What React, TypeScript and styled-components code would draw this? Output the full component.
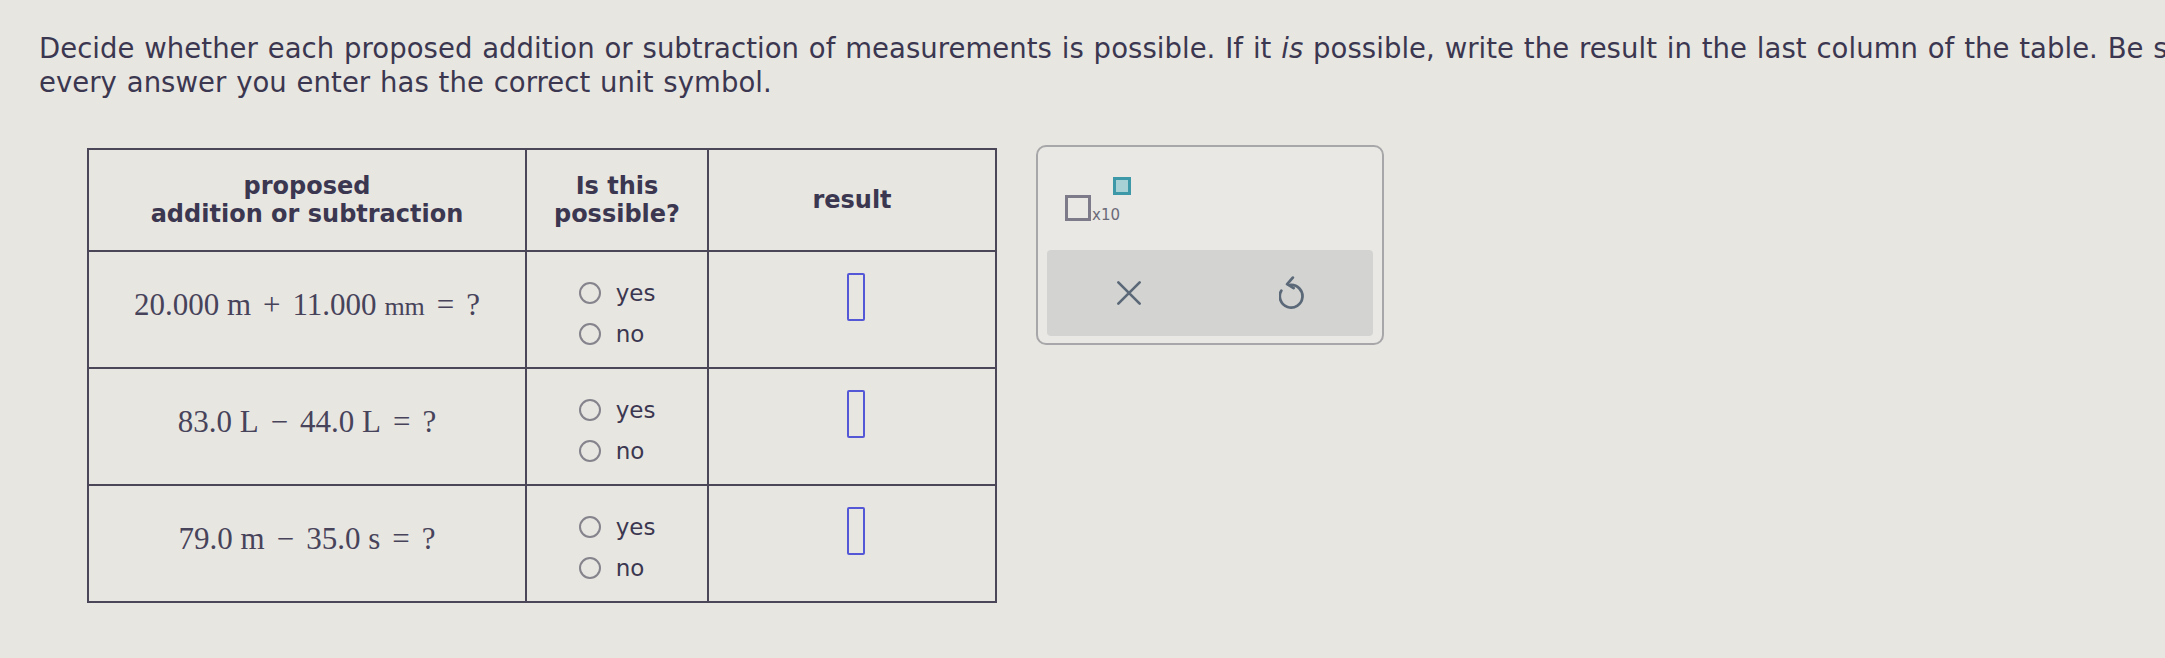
import React from "react";
import styled, { createGlobalStyle } from "styled-components";

const Global = createGlobalStyle`
  html, body {
    margin: 0;
    padding: 0;
    background: #e8e6e1;
    overflow: hidden;
  }
  body {
    width: 2165px;
    height: 658px;
  }
`;

const Page = styled.div`
  padding: 31px 0 0 39px;
  font-family: "DejaVu Sans", Verdana, sans-serif;
  color: #3b3750;
  width: 2165px;
  height: 658px;
  box-sizing: border-box;
  overflow: hidden;
`;

const Instructions = styled.p`
  margin: 0;
  font-size: 27.5px;
  line-height: 34px;
  white-space: nowrap;
  letter-spacing: 0.05px;
  word-spacing: 1px;
`;

const Content = styled.div`
  display: flex;
  align-items: flex-start;
  gap: 39px;
  margin-top: 49px;
  margin-left: 48px;
`;

const Table = styled.table`
  border-collapse: collapse;
  border: 2px solid #4b4759;
  table-layout: fixed;
`;

const HeadCell = styled.th<{ $w: number }>`
  width: ${(p) => p.$w}px;
  height: 100px;
  padding: 0;
  border: 2px solid #4b4759;
  font-weight: bold;
  font-size: 24px;
  line-height: 28px;
  text-align: center;
  vertical-align: middle;
  color: #3b3750;
`;

const Cell = styled.td`
  height: 115px;
  padding: 0;
  border: 2px solid #4b4759;
  text-align: center;
  vertical-align: middle;
`;

const Equation = styled.span`
  font-family: "Liberation Serif", "Times New Roman", serif;
  font-size: 31px;
  color: #47435a;
  position: relative;
  top: -5px;
`;

const Op = styled.span`
  margin: 0 12px;
`;

const Unit = styled.span<{ $small?: boolean }>`
  font-size: ${(p) => (p.$small ? "26px" : "31px")};
`;

const RadioGroup = styled.div`
  display: inline-flex;
  flex-direction: column;
  gap: 13px;
  align-items: flex-start;
  position: relative;
  top: 4px;
`;

const RadioLabel = styled.label`
  display: flex;
  align-items: center;
  gap: 15px;
  font-size: 23px;
  line-height: 28px;
  color: #3b3750;
`;

const RadioCircle = styled.span`
  width: 18px;
  height: 18px;
  border: 2px solid #85838c;
  border-radius: 50%;
  display: inline-block;
`;

const AnswerBox = styled.span`
  display: inline-block;
  width: 14px;
  height: 44px;
  margin-left: 8px;
  border: 2px solid #5457d6;
  border-radius: 2px;
  position: relative;
  top: -11px;
`;

const Panel = styled.div`
  width: 348px;
  height: 200px;
  margin-top: -3px;
  box-sizing: border-box;
  border: 2px solid #a7a7a9;
  border-radius: 10px;
  padding: 30px 9px 7px 9px;
  display: flex;
  flex-direction: column;
  justify-content: space-between;
  background: #e9e8e4;
`;

const SciRow = styled.div`
  display: flex;
  align-items: flex-end;
  padding-left: 18px;
  height: 44px;
`;

const BigSquare = styled.span`
  width: 20px;
  height: 20px;
  border: 3px solid #7d7b8a;
  display: inline-block;
`;

const Times10 = styled.span`
  font-size: 15px;
  color: #6b6a78;
  margin-left: 1px;
  line-height: 16px;
  align-self: flex-end;
  margin-bottom: -2px;
`;

const SupSquare = styled.span`
  width: 12px;
  height: 12px;
  border: 3px solid #3d98a8;
  background: #a7d1d5;
  display: inline-block;
  align-self: flex-start;
  margin-left: -7px;
`;

const ButtonBar = styled.div`
  height: 86px;
  background: #d3d3d1;
  border-radius: 4px;
  display: grid;
  grid-template-columns: 1fr 1fr;
`;

const IconButton = styled.button`
  background: none;
  border: none;
  padding: 0;
  display: flex;
  align-items: center;
  justify-content: center;
  color: #5a6878;
`;

const rows = [
  { a: "20.000", ua: "m", op: "+", b: "11.000", ub: "mm", smallB: true },
  { a: "83.0", ua: "L", op: "−", b: "44.0", ub: "L", smallB: false },
  { a: "79.0", ua: "m", op: "−", b: "35.0", ub: "s", smallB: false },
];

export default function App() {
  return (
    <>
      <Global />
      <Page>
        <Instructions>
          Decide whether each proposed addition or subtraction of measurements is possible. If it <i>is</i> possible,
          write the result in the last column of the table. Be sure that
          <br />
          every answer you enter has the correct unit symbol.
        </Instructions>
        <Content>
          <Table>
            <thead>
              <tr>
                <HeadCell $w={436}>
                  proposed
                  <br />
                  addition or subtraction
                </HeadCell>
                <HeadCell $w={180}>
                  Is this
                  <br />
                  possible?
                </HeadCell>
                <HeadCell $w={286}>result</HeadCell>
              </tr>
            </thead>
            <tbody>
              {rows.map((r, i) => (
                <tr key={i}>
                  <Cell>
                    <Equation>
                      {r.a} <Unit $small={false}>{r.ua}</Unit>
                      <Op>{r.op}</Op>
                      {r.b} <Unit $small={r.smallB}>{r.ub}</Unit>
                      <Op>=</Op>?
                    </Equation>
                  </Cell>
                  <Cell>
                    <RadioGroup>
                      <RadioLabel>
                        <RadioCircle />
                        yes
                      </RadioLabel>
                      <RadioLabel>
                        <RadioCircle />
                        no
                      </RadioLabel>
                    </RadioGroup>
                  </Cell>
                  <Cell>
                    <AnswerBox />
                  </Cell>
                </tr>
              ))}
            </tbody>
          </Table>
          <Panel>
            <SciRow>
              <BigSquare />
              <Times10>x10</Times10>
              <SupSquare />
            </SciRow>
            <ButtonBar>
              <IconButton aria-label="clear">
                <svg width="32" height="32" viewBox="0 0 24 24" fill="none" stroke="currentColor" strokeWidth="2" strokeLinecap="round">
                  <path d="M4 4 L20 20 M20 4 L4 20" />
                </svg>
              </IconButton>
              <IconButton aria-label="undo">
                <svg width="26" height="34" viewBox="4 3.5 16 21" fill="none" stroke="currentColor" strokeWidth="1.7" strokeLinecap="round" strokeLinejoin="round">
                  <path d="M11 9 A7 7 0 1 1 5.4 12.5" />
                  <path d="M12.5 4.5 L9 8.5 L13 11" />
                </svg>
              </IconButton>
            </ButtonBar>
          </Panel>
        </Content>
      </Page>
    </>
  );
}
